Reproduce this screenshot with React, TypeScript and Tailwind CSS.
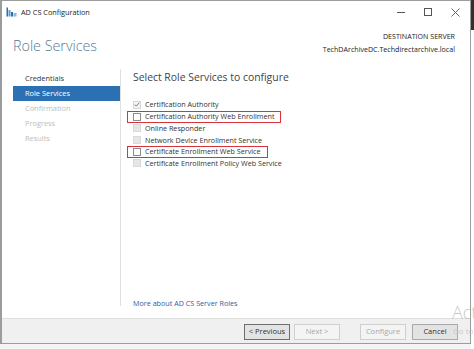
import React from "react";

const roleServices = [
  { label: "Certification Authority", state: "checked", flagged: false },
  { label: "Certification Authority Web Enrollment", state: "open", flagged: true },
  { label: "Online Responder", state: "disabled", flagged: false },
  { label: "Network Device Enrollment Service", state: "disabled", flagged: false },
  { label: "Certificate Enrollment Web Service", state: "open", flagged: true },
  { label: "Certificate Enrollment Policy Web Service", state: "disabled", flagged: false },
];

const steps = [
  { label: "Credentials", kind: "done" },
  { label: "Role Services", kind: "active" },
  { label: "Confirmation", kind: "todo" },
  { label: "Progress", kind: "todo" },
  { label: "Results", kind: "todo" },
];

function CheckBox({ state }: { state: string }) {
  if (state === "checked") {
    return (
      <span className="w-[8px] h-[8px] border border-[#d6d6d6] bg-[#f4f4f4] flex items-center justify-center">
        <svg className="w-[7px] h-[7px]" viewBox="0 0 8 8" fill="none">
          <path d="M1 4.2l2 2L7 1.6" stroke="#6f6f6f" strokeWidth={1.2} />
        </svg>
      </span>
    );
  }
  if (state === "disabled") {
    return <span className="w-[8px] h-[8px] border border-[#d9d9d9] bg-[#e6e6e6]" />;
  }
  return <span className="w-[8px] h-[8px] border border-[#8c8c8c] bg-white" />;
}

function Button({ label, kind }: { label: string; kind: "focus" | "off" | "normal" }) {
  const cls =
    kind === "focus"
      ? "border-[#6e6e6e] bg-[#e3e3e3] text-[#333]"
      : kind === "off"
      ? "border-[#cfcfcf] bg-[#f4f4f4] text-[#a8a8a8]"
      : "border-[#a9a9a9] bg-[#e3e3e3] text-[#333]";
  return (
    <div className={`w-[46px] h-[16px] border flex items-center justify-center text-[7.5px] ${cls}`}>
      {label}
    </div>
  );
}

export default function App() {
  return (
    <div
      className="relative w-[474px] h-[349px] overflow-hidden bg-[#f4f4f4] flex"
      style={{ fontFamily: '"Open Sans", "Noto Sans", sans-serif' }}
    >
      {/* Wizard window */}
      <div className="w-[471px] h-[344px] shrink-0 border border-[#9c9c9c] border-l-2 bg-white flex flex-col">
        {/* Title bar */}
        <div className="h-[22px] flex items-center pl-[4px] pr-[10px]">
          <svg className="w-[11px] h-[10px]" viewBox="0 0 11 10">
            <rect x="0.5" y="0.5" width="1.5" height="9" fill="#2a6fb0" />
            <rect x="2.5" y="3" width="2" height="6.5" fill="#5a9bd5" />
            <rect x="5" y="5" width="2" height="4.5" fill="#2a6fb0" />
            <rect x="7.5" y="6" width="3" height="3.5" fill="#8fb8de" />
          </svg>
          <span className="ml-[4px] text-[7.3px] text-[#222]">AD CS Configuration</span>
          <div className="ml-auto flex items-center gap-[19px] text-[#444]">
            <span className="w-[8px] h-[1px] bg-[#555]" />
            <span className="w-[8px] h-[8px] border border-[#555]" />
            <svg className="w-[9px] h-[9px]" viewBox="0 0 9 9">
              <path d="M0.5 0.5l8 8M8.5 0.5l-8 8" stroke="#555" strokeWidth={0.9} />
            </svg>
          </div>
        </div>

        {/* Header */}
        <div className="h-[44px] flex items-start pl-[11px] pr-[15px]">
          <div className="mt-[12px] text-[14.3px] font-light leading-[22px] text-[#557a94]">Role Services</div>
          <div className="ml-auto mt-[7px] text-right text-[7.1px] leading-[13px] text-[#222]">
            <div>DESTINATION SERVER</div>
            <div>TechDArchiveDC.Techdirectarchive.local</div>
          </div>
        </div>

        {/* Body */}
        <div className="flex-1 flex">
          <nav className="w-[118px] pl-[11px] pt-[4px] flex flex-col">
            {steps.map((s) => (
              <div
                key={s.label}
                className={`h-[15px] pl-[12px] flex items-center text-[7.4px] ${
                  s.kind === "active"
                    ? "bg-[#2c70b4] text-white"
                    : s.kind === "done"
                    ? "text-[#333]"
                    : "text-[#bdbdbd]"
                }`}
              >
                {s.label}
              </div>
            ))}
          </nav>
          <div className="w-[1px] mt-[2px] mb-[12px] bg-[#e0e0e0]" />
          <div className="flex-1 pl-[6px] pt-[3px] pb-[9px] flex flex-col">
            <div className="pl-[6px] text-[10.4px] leading-[14px] text-[#444]">Select Role Services to configure</div>
            <div className="mt-[15px] flex flex-col">
              {roleServices.map((r) => (
                <div key={r.label} className="h-[11.7px] flex items-center">
                  <div
                    className={`h-[12px] pl-[5px] pr-[6px] flex items-center gap-[4px] border ${
                      r.flagged ? "border-[#d8323a]" : "border-transparent"
                    }`}
                  >
                    <CheckBox state={r.state} />
                    <span className="text-[7.2px] text-[#333] whitespace-nowrap">{r.label}</span>
                  </div>
                </div>
              ))}
            </div>
            <a className="mt-auto pl-[6px] text-[7.2px] leading-[12px] text-[#2a62a6]">More about AD CS Server Roles</a>
          </div>
        </div>

        {/* Footer */}
        <div className="h-[25px] border-t border-[#dedede] bg-[#f0f0f0] flex items-start justify-end pt-[5px] pr-[12px]">
          <Button label="< Previous" kind="focus" />
          <div className="ml-[4px]">
            <Button label="Next >" kind="off" />
          </div>
          <div className="ml-[20px]">
            <Button label="Configure" kind="off" />
          </div>
          <div className="ml-[6px]">
            <Button label="Cancel" kind="normal" />
          </div>
        </div>
      </div>

      {/* Desktop behind the window */}
      <div className="flex-1 flex flex-col">
        <div className="h-[30px] bg-[#34302a]" />
        <div className="flex-1 bg-white" />
      </div>

      {/* Activation watermark */}
      <div className="absolute left-[452px] top-[302px] text-[18px] leading-[20px] font-light text-[#b9b9b9]/80 whitespace-nowrap">
        Activate Windows
      </div>
      <div className="absolute left-[453px] top-[326px] text-[8px] leading-[10px] text-[#bdbdbd]/80 whitespace-nowrap">
        Go to Settings
      </div>
    </div>
  );
}
